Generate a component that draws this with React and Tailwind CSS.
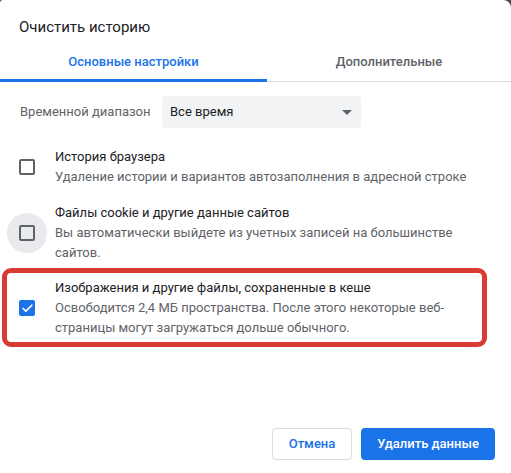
import { Check } from 'lucide-react'

function Checkbox({ checked, hover }) {
    return (
        <div className={`w-[40px] h-[40px] shrink-0 rounded-full flex items-center justify-center ${hover ? 'bg-[#e8eaed]' : ''}`}>
            {checked ? (
                <div className="w-[16px] h-[16px] rounded-[2px] bg-[#1a73e8] flex items-center justify-center">
                    <Check size={13} strokeWidth={3.2} className="text-white" />
                </div>
            ) : (
                <div className="w-[16px] h-[16px] rounded-[2px] border-2 border-[#5f6368]" />
            )}
        </div>
    )
}

function Option({ title, lines, checked, hover }) {
    return (
        <div className="flex items-center">
            <Checkbox checked={checked} hover={hover} />
            <div className="ml-[8px] text-[13px] leading-[20px]">
                <div className="text-[#202124]">{title}</div>
                {lines.map(line => (
                    <div key={line} className="text-[#5f6368] whitespace-nowrap">{line}</div>
                ))}
            </div>
        </div>
    )
}

export default function App() {
    return (
        <div className="w-[511px] h-[473px] bg-[#4a4a4a] font-['Roboto',_'Noto_Sans',_sans-serif]">
            <div className="h-full bg-white rounded-tl-[3px] rounded-tr-[8px] flex flex-col">
                <h1 className="px-[19px] pt-[17px] text-[15px] leading-[20px] text-[#202124]">Очистить историю</h1>

                <div className="flex">
                    <div className="w-[267px] pt-[15px] pb-[7px] border-b-[3px] border-[#1a73e8] text-center text-[13px] leading-[20px] font-medium text-[#1a73e8]">
                        Основные настройки
                    </div>
                    <div className="flex-1 pt-[15px] pb-[9px] border-b border-[#dadce0] text-center text-[13px] leading-[20px] font-medium text-[#5f6368]">
                        Дополнительные
                    </div>
                </div>

                <div className="flex items-center pl-[20px] mt-[14px]">
                    <span className="w-[142px] text-[13px] text-[#5f6368]">Временной диапазон</span>
                    <div className="w-[199px] h-[32px] rounded-[4px] bg-[#f1f3f4] flex items-center justify-between pl-[8px] pr-[9px]">
                        <span className="text-[13px] text-[#202124]">Все время</span>
                        <svg width="10" height="5" viewBox="0 0 10 5">
                            <polygon points="0,0 10,0 5,5" fill="#5f6368" />
                        </svg>
                    </div>
                </div>

                <div className="mt-[19px] flex flex-col">
                    <div className="pl-[7px]">
                        <Option
                            title="История браузера"
                            lines={['Удаление истории и вариантов автозаполнения в адресной строке']}
                        />
                    </div>
                    <div className="pl-[7px] mt-[16px]">
                        <Option
                            title="Файлы cookie и другие данные сайтов"
                            lines={['Вы автоматически выйдете из учетных записей на большинстве', 'сайтов.']}
                            hover
                        />
                    </div>
                    <div className="ml-[2px] w-[485px] mt-[5px] border-[5px] border-[#d93a32] rounded-[9px] pt-[5px] pb-[4px]">
                        <Option
                            title="Изображения и другие файлы, сохраненные в кеше"
                            lines={['Освободится 2,4 МБ пространства. После этого некоторые веб-', 'страницы могут загружаться дольше обычного.']}
                            checked
                        />
                    </div>
                </div>

                <div className="mt-auto flex justify-end gap-[9px] pr-[16px] pb-[13px]">
                    <button className="w-[80px] h-[32px] rounded-[4px] border border-[#dadce0] bg-white text-[13px] font-medium text-[#1a73e8]">
                        Отмена
                    </button>
                    <button className="w-[134px] h-[32px] rounded-[4px] bg-[#1a73e8] text-[13px] font-medium text-white">
                        Удалить данные
                    </button>
                </div>
            </div>
        </div>
    )
}
